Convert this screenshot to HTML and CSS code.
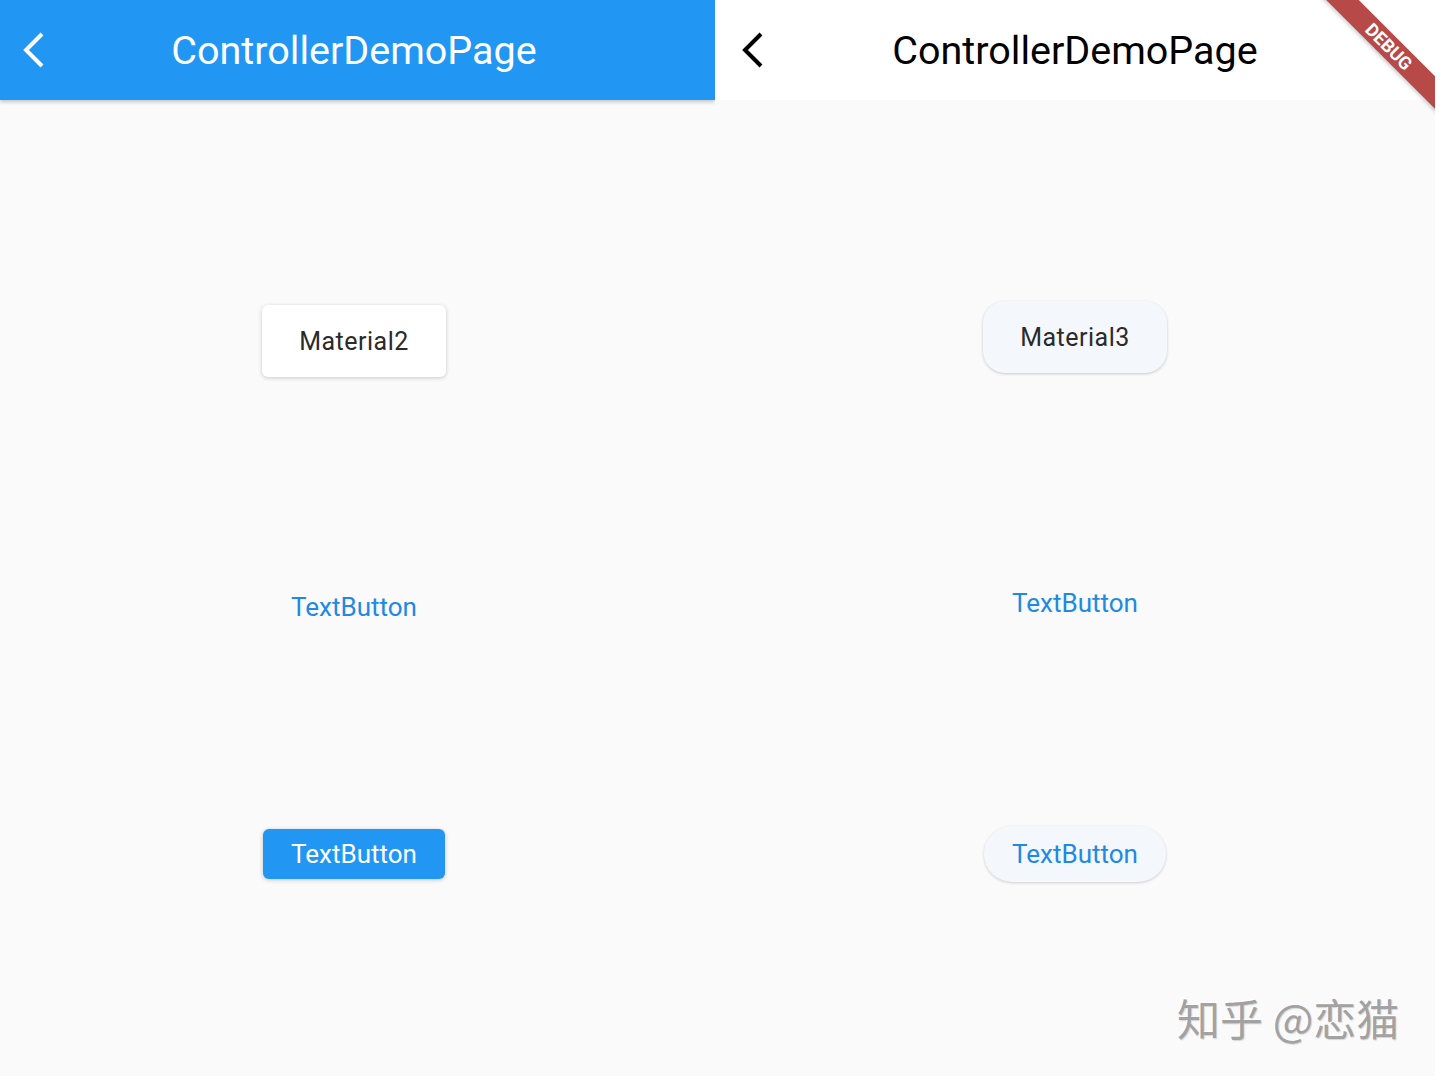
FILE: index.html
```html
<!DOCTYPE html>
<html lang="en">
<head>
  <meta charset="UTF-8">
  <title>ControllerDemoPage</title>
  <link rel="stylesheet" href="styles.css">
</head>
<body>
  <div class="screen">
    <section class="pane pane-m2">
      <header class="appbar appbar-m2">
        <svg class="back" width="24" height="36" viewBox="0 0 24 36">
          <path d="M20 2 L4 18 L20 34" fill="none" stroke="#fff" stroke-width="4"/>
        </svg>
        <h1 class="title">ControllerDemoPage</h1>
      </header>
      <main class="content">
        <button class="btn btn-m2 first">Material2</button>
        <button class="btn btn-text second">TextButton</button>
        <button class="btn btn-filled third">TextButton</button>
      </main>
    </section>

    <section class="pane pane-m3">
      <header class="appbar appbar-m3">
        <svg class="back" width="24" height="36" viewBox="0 0 24 36">
          <path d="M20 2 L4 18 L20 34" fill="none" stroke="#000" stroke-width="4"/>
        </svg>
        <h1 class="title">ControllerDemoPage</h1>
      </header>
      <main class="content">
        <button class="btn btn-m3 first">Material3</button>
        <button class="btn btn-text second">TextButton</button>
        <button class="btn btn-pill third">TextButton</button>
      </main>
      <div class="debug">DEBUG</div>
    </section>

    <div class="watermark">知乎 @恋猫</div>
  </div>
</body>
</html>
```

FILE: styles.css
```css
body {
  margin: 0;
  background: #fff;
  font-family: Roboto, "Noto Sans", sans-serif;
}
.screen {
  position: relative;
  display: flex;
  width: 1435px;
  height: 1076px;
}
.pane {
  position: relative;
  display: flex;
  flex-direction: column;
  background: #fafafa;
  overflow: hidden;
}
.pane-m2 {
  width: 715px;
}
.pane-m3 {
  flex: 1;
}
.appbar {
  position: relative;
  height: 100px;
  display: flex;
  align-items: center;
  flex-shrink: 0;
}
.appbar-m2 {
  background: #2196f3;
  color: #fff;
  box-shadow: 0 2px 4px rgba(0, 0, 0, 0.22);
  z-index: 1;
  padding-right: 7px;
}
.appbar-m3 {
  background: #fff;
  color: #000;
}
.back {
  position: absolute;
  top: 32px;
}
.appbar-m2 .back {
  left: 22px;
}
.appbar-m3 .back {
  left: 26px;
}
.title {
  flex: 1;
  margin: 0;
  text-align: center;
  font-size: 39.5px;
  font-weight: 400;
}
.content {
  display: flex;
  flex-direction: column;
  align-items: center;
}
.pane-m2 .content {
  padding-right: 7px;
}
.btn {
  font-family: Roboto, "Noto Sans", sans-serif;
  font-size: 26px;
  border: none;
  cursor: pointer;
  padding: 0;
}
.btn-m2 {
  width: 184px;
  height: 72px;
  background: #fff;
  color: #2a2a2a;
  font-size: 25px;
  letter-spacing: 0.5px;
  border-radius: 6px;
  box-shadow: 0 1px 4px rgba(0, 0, 0, 0.2);
}
.btn-m3 {
  width: 184px;
  height: 72px;
  background: #f4f8fc;
  color: #2a2a2a;
  font-size: 25px;
  letter-spacing: 0.5px;
  border-radius: 22px;
  box-shadow: 0 1px 3px rgba(0, 0, 0, 0.2);
}
.btn-text {
  width: 184px;
  height: 56px;
  background: transparent;
  color: #2189e2;
}
.btn-filled {
  width: 182px;
  height: 50px;
  background: #2196f3;
  color: #fff;
  border-radius: 6px;
  box-shadow: 0 1px 4px rgba(0, 0, 0, 0.22);
}
.btn-pill {
  width: 182px;
  height: 56px;
  background: #f4f8fc;
  color: #2189e2;
  border-radius: 28px;
  box-shadow: 0 1px 3px rgba(0, 0, 0, 0.18);
}
.pane-m2 .first {
  margin-top: 205px;
}
.pane-m2 .second {
  margin-top: 202px;
}
.pane-m2 .third {
  margin-top: 194px;
}
.pane-m3 .first {
  margin-top: 201px;
}
.pane-m3 .second {
  margin-top: 202px;
}
.pane-m3 .third {
  margin-top: 195px;
}
.debug {
  position: absolute;
  left: 574px;
  top: 35px;
  width: 200px;
  height: 23px;
  line-height: 23px;
  background: rgba(165, 28, 28, 0.8);
  color: #fff;
  font-size: 18px;
  font-weight: 700;
  text-align: center;
  transform: rotate(45deg);
  box-shadow: 0 2px 4px rgba(0, 0, 0, 0.2);
  z-index: 2;
}
.watermark {
  position: absolute;
  left: 1177px;
  top: 986px;
  font-family: "Noto Sans CJK SC", sans-serif;
  font-size: 43px;
  color: #a2a2a2;
  text-shadow: -1px -1px 0 #fff, 1px 1px 1px rgba(0, 0, 0, 0.15);
  white-space: nowrap;
}
```
